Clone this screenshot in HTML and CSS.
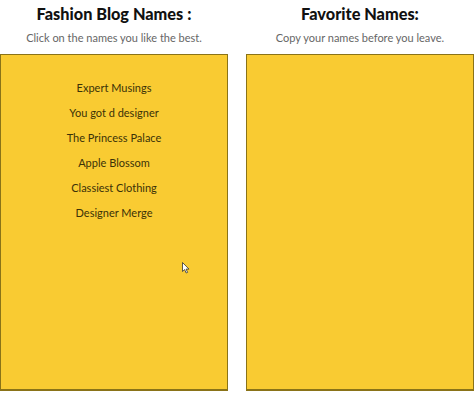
FILE: index.html
```html
<!DOCTYPE html>
<html>
<head>
<meta charset="utf-8">
<link rel="stylesheet" href="styles.css">
</head>
<body>
<div class="cols">
  <section class="col">
    <h2 class="title">Fashion Blog Names :</h2>
    <p class="sub">Click on the names you like the best.</p>
    <div class="box">
      <ul class="names">
        <li>Expert Musings</li>
        <li>You got d designer</li>
        <li>The Princess Palace</li>
        <li>Apple Blossom</li>
        <li>Classiest Clothing</li>
        <li>Designer Merge</li>
      </ul>
      <svg class="cursor" width="8" height="12" viewBox="0 0 8 12"><path d="M0.5 0.5 L0.5 9.5 L2.6 7.6 L4.2 11 L5.6 10.4 L4.1 7.1 L7 7.1 Z" fill="#fff" stroke="#333" stroke-width="0.8"/></svg>
    </div>
  </section>
  <section class="col">
    <h2 class="title">Favorite Names:</h2>
    <p class="sub">Copy your names before you leave.</p>
    <div class="box"></div>
  </section>
</div>
</body>
</html>
```
FILE: styles.css
```css
html, body { margin: 0; padding: 0; background: #fff; }
body { font-family: "Lato", "Liberation Sans", sans-serif; width: 474px; height: 393px; overflow: hidden; }
.cols { display: grid; grid-template-columns: 228px 228px; column-gap: 18px; }
.col { display: flex; flex-direction: column; align-items: stretch; }
.title { margin: 3px 0 0; text-align: center; font-size: 16.3px; font-weight: 900; color: #111; line-height: 22px; }
.sub { margin: 6px 0 0; text-align: center; font-size: 11px; color: #666; line-height: 14px; }
.box { position: relative; margin-top: 9px; height: 337px; background: #f9cb32; border: 1px solid #8a7318; border-bottom-width: 2px; box-sizing: border-box; }
.names { list-style: none; margin: 0; padding: 26px 0 0; display: flex; flex-direction: column; gap: 11px; }
.names li { text-align: center; font-size: 11px; line-height: 14px; color: #3b3208; }
.cursor { position: absolute; left: 181px; top: 207px; }
```
